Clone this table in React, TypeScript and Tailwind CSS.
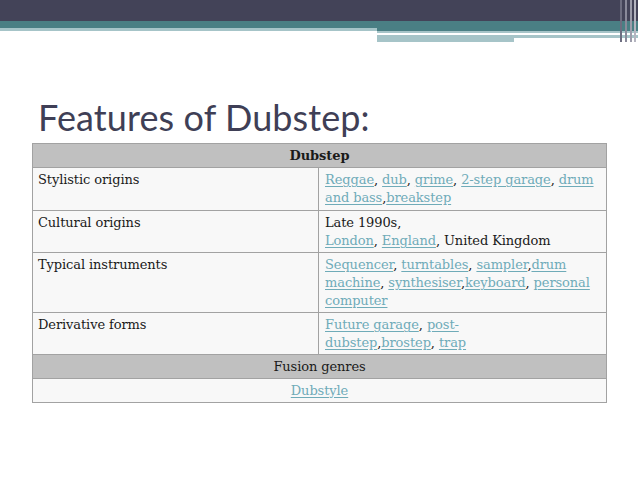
import React from 'react';

const L: React.FC<{ children: React.ReactNode }> = ({ children }) => (
  <a className="text-[#6fabb8] underline decoration-1 underline-offset-2">{children}</a>
);

const rows: { label: string; value: React.ReactNode; h: string }[] = [
  {
    label: 'Stylistic origins',
    h: 'h-[43px]',
    value: (
      <>
        <L>Reggae</L>, <L>dub</L>, <L>grime</L>, <L>2-step garage</L>, <L>drum and bass</L>,<L>breakstep</L>
      </>
    ),
  },
  {
    label: 'Cultural origins',
    h: 'h-[42px]',
    value: (
      <>
        Late 1990s,
        <br />
        <L>London</L>, <L>England</L>, United Kingdom
      </>
    ),
  },
  {
    label: 'Typical instruments',
    h: 'h-[60px]',
    value: (
      <>
        <L>Sequencer</L>, <L>turntables</L>, <L>sampler</L>,<L>drum machine</L>, <L>synthesiser</L>,<L>keyboard</L>,{' '}
        <L>personal computer</L>
      </>
    ),
  },
  {
    label: 'Derivative forms',
    h: 'h-[42px]',
    value: (
      <>
        <L>Future garage</L>, <L>post-<br />dubstep</L>,<L>brostep</L>, <L>trap</L>
      </>
    ),
  },
];

export default function App() {
  return (
    <div className="w-[638px] h-[478px] bg-white overflow-hidden flex flex-col">
      {/* top banner */}
      <div className="relative h-[43px]">
        <div className="h-[21px] bg-[#434358]" />
        <div className="flex">
          <div className="w-[377px]">
            <div className="h-[7px] bg-[#4a7f84]" />
            <div className="h-[3px] bg-[#a6c4c8]" />
          </div>
          <div className="flex-1">
            <div className="h-[10px] bg-[#4a7f84]" />
            <div className="h-[2px] bg-[#a6c4c8]" />
            <div className="h-[2px] bg-white w-[213px]" />
            <div className="flex">
              <div className="w-[137px] h-[7px] bg-[#a6c4c8]" />
              <div className="flex-1 h-[3px] bg-[#a6c4c8]" />
            </div>
          </div>
        </div>
        <div className="absolute right-0 top-0 h-[42px] w-[18px] flex">
          <div className="w-[2px] bg-[#6d6d80]" />
          <div className="w-[3px] bg-transparent" />
          <div className="w-[2px] bg-[#8a8a9a]" />
          <div className="w-[3px] bg-transparent" />
          <div className="w-[2px] bg-[#9d9dab]" />
          <div className="w-[2px] bg-transparent" />
          <div className="w-[2px] bg-[#b5b5c0]" />
        </div>
      </div>

      <h1 className="ml-[38px] mt-[53px] text-[36px] leading-[42px] text-[#3f3f56] font-['Lato',sans-serif] tracking-[0.1px]">
        Features of Dubstep:
      </h1>

      <div className="ml-[32px] mt-[5px] w-[575px] border border-[#a2a2a2] font-['DejaVu_Serif',serif] text-[13px] leading-[18px] text-[#1a1a1a] tracking-[-0.1px]">
        <div className="h-[24px] bg-[#c0c0c0] flex items-center justify-center font-bold border-b border-[#a2a2a2]">
          Dubstep
        </div>
        {rows.map((r) => (
          <div key={r.label} className={`flex border-b border-[#a2a2a2] bg-[#f8f8f8] ${r.h}`}>
            <div className="w-[286px] pl-[5px] pt-[3px] border-r border-[#a2a2a2]">{r.label}</div>
            <div className="flex-1 pl-[6px] pr-[4px] pt-[3px]">{r.value}</div>
          </div>
        ))}
        <div className="h-[24px] bg-[#c0c0c0] flex items-center justify-center border-b border-[#a2a2a2]">
          Fusion genres
        </div>
        <div className="h-[23px] bg-[#f8f8f8] flex items-center justify-center">
          <L>Dubstyle</L>
        </div>
      </div>
    </div>
  );
}
